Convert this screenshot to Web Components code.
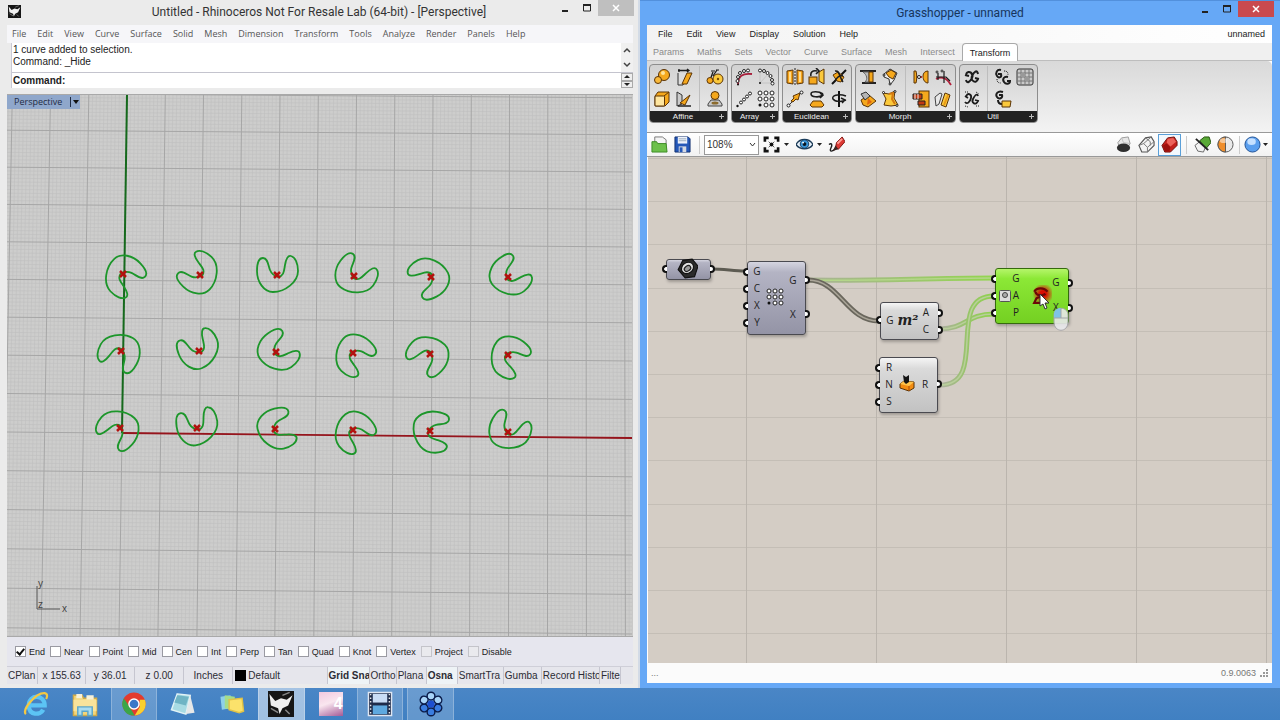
<!DOCTYPE html>
<html lang="en">
<head>
<meta charset="utf-8">
<title>Desktop</title>
<style>
  html, body { height: 100%; margin: 0; }
  body { font-family: "Liberation Sans", Arial, sans-serif; overflow: hidden; }
</style>
</head>
<body>
<desk-top></desk-top>

<script>
const SYSTEM_FONT = '"Open Sans", "Noto Sans", sans-serif';

// shared by every shadow root
const BASE_CSS = `
  * { box-sizing: border-box; }
  button, select, input {
    font: inherit; color: inherit; margin: 0; padding: 0;
    border: 0; background: none; border-radius: 0; outline: none;
  }
  button { display: inline-flex; align-items: center; justify-content: center; }
  svg { display: block; }
`;

class BaseElement extends HTMLElement {
  connectedCallback() {
    if (this.shadowRoot) return;
    const shadow = this.attachShadow({ mode: 'open' });
    shadow.innerHTML = `<style>${BASE_CSS}${this.styles()}</style>${this.template()}`;
  }
  styles() { return ''; }
  template() { return '<slot></slot>'; }
}

/* ---------- icons ---------- */

const OR = 'fill="#f5a81c" stroke="#5b3406"';
const YE = 'fill="#fbc93c" stroke="#5b3406"';
const DK = 'fill="none" stroke="#1c1c1c"';
const RING = 'fill="#fff" stroke="#222"';
const ring = (x, y, r = 1.5) => `<circle cx="${x}" cy="${y}" r="${r}" ${RING}/>`;

const ICONS = {
  // Affine
  scale: `<circle cx="11" cy="7" r="5.5" fill="#f6a91e" stroke="#5b3406"/><circle cx="10" cy="5" r="2" fill="#ffe49a"/><circle cx="5" cy="12" r="3.5" fill="#f9b93a" stroke="#5b3406"/>`,
  shear: `<path d="M3 5v12h5L14 5" fill="#ddd" stroke="#333"/><path d="M7 16L12 5h5l-5 11z" ${OR}/><path d="M3 2.5h11M12 1l2 1.5L12 4M4 1v3" ${DK} stroke-width="1.3"/>`,
  scalenu: `<path d="M7 4L4 12M7 8l4-6" ${DK} stroke-width="1.3"/><path d="M5 3h4M10 2h3" ${DK}/><circle cx="4" cy="12.5" r="3" ${OR}/><circle cx="12" cy="11" r="5" ${YE}/><circle cx="12" cy="11" r="1.2" fill="#7a4b00"/>`,
  box: `<path d="M2 6l3-4h11v10l-4 4H2z" ${OR}/><rect x="2" y="6" width="9.5" height="10" rx="1" fill="#ffe6a0" stroke="#5b3406"/><path d="M11 6l5-4" stroke="#5b3406"/>`,
  triangle: `<path d="M2 2v14l5-2V5z" fill="#ccc" stroke="#333"/><path d="M5 13L15 5l-5 10z" ${OR}/><path d="M3 16h13" stroke="#222" stroke-width="1.5"/>`,
  project: `<path d="M2 14l3-4h8l3 4v2H2z" fill="#c9c9c9" stroke="#444"/><ellipse cx="9" cy="13" rx="3.5" ry="1.5" fill="#8b6b2e"/><circle cx="9" cy="5.5" r="4" ${OR}/>`,
  // Array
  arrcrv: `<path d="M3 17C3 8 7 5 17 6" fill="none" stroke="#a8203c" stroke-width="1.8"/>${ring(2.5, 13)}${ring(3, 9)}${ring(5, 5)}${ring(9, 3)}${ring(13, 2.5)}<circle cx="3" cy="16.5" r="1" fill="#111"/>`,
  arrpolar: `<path d="M3 15L12 5M3 15h12M3 15V4" stroke="#c4c4c4"/>${ring(3, 2.5)}${ring(7, 3)}${ring(10.5, 5)}${ring(13.5, 8)}${ring(15, 12)}${ring(15.5, 15.5)}<circle cx="3" cy="15" r="1" fill="#111"/>`,
  arrline: `<circle cx="2.5" cy="16" r="1.2" fill="#111"/>${ring(6, 12.5)}${ring(9, 9.5)}${ring(12, 6.5)}${ring(15, 3.5)}`,
  arrgrid: [3, 9, 15].map(x => ring(x, 3, 2) + ring(x, 9, 2) + (x === 3 ? '<circle cx="3" cy="15" r="1.5" fill="#111"/>' : ring(x, 15, 2))).join(''),
  // Euclidean
  mirror: `<path d="M1 3l6-1v14l-6-1zM11 2l6 1v12l-6 1z" fill="#f7a51c" stroke="#5b3406"/><path d="M4 4v10M14 4v10" stroke="#ffdb8a" stroke-width="2"/><path d="M9 0v18" stroke="#222" stroke-dasharray="2 1"/>`,
  orient: `<rect x="1" y="9" width="8" height="7" ${OR}/><path d="M11 4l5-3v15l-5-3z" ${YE}/><path d="M3 8C2 4 5 2 9 3M8 0l3 3-3 3" ${DK} stroke-width="1.6"/>`,
  rotaxis: `<path d="M2 16L16 2" stroke="#111" stroke-width="2"/><path d="M3 7l5-3 6 5-3 5-4-1z" ${OR}/><path d="M5 3c5-1 4 6 8 11M13 8c-4-1-6 1-8 5" ${DK} stroke-width="1.5"/>`,
  move: `<path d="M3 15L15 3" stroke="#333"/><path d="M5 11l3-3-1-2 7-3-2 7-2-1-3 3z" ${OR}/>${ring(2.5, 15.5)}${ring(15.5, 2.5)}`,
  rotate3d: `<path d="M15 4C11 1 3 1 3 4s8 4 12 1M12 3l3 2-3 3" ${DK} stroke-width="1.6"/><path d="M5 11h8l3 4-2 2H4l-2-2z" ${OR}/>`,
  rotate: `<path d="M9 1v16" stroke="#111" stroke-width="2"/><path d="M16 6C8 3 1 6 3 9c2 3 9 3 13 1M11 8l4 2-3 3" ${DK} stroke-width="1.5"/>`,
  // Morph
  boxmorph: `<path d="M1 3h16M3 15h14" stroke="#222" stroke-width="1.8"/><path d="M4 4c4 3 5 7 2 10h4V4z" fill="#bbb" stroke="#666"/><path d="M10 4h4v10h-4z" ${OR}/>`,
  surfmorph: `<path d="M3 6l6-5 7 4-3 7-4 5-1-6-5-2z" fill="#eee" stroke="#333"/><path d="M5 5l5-3 5 3-3 6-4-2z" ${OR}/>${ring(9, 16, 1)}${ring(3, 7, 1)}`,
  blend: `<path d="M2 3h2c1 4 1 8 0 12H2z" ${OR}/><path d="M11 8c0-3 2-5 5-5v12c-3 0-5-3-5-7z" ${OR}/><path d="M5 9h5" stroke="#b33" stroke-width="2"/>${ring(7, 9)}`,
  mapcrv: `<path d="M2 11c6-3 11-1 15 6" fill="none" stroke="#b3213c" stroke-width="1.8"/><path d="M2 9h10l4 4M10 3v12M4 5v7" ${DK} stroke-width="1.2"/>${ring(3, 4, 1)}${ring(8, 3, 1)}`,
  camera: `<path d="M2 10l8-5 7 6-8 6-5-2z" ${OR}/><path d="M2 4l5-2 4 4-5 4z" fill="#b5b5b5" stroke="#333"/><path d="M9 8l4 4-5 3z" fill="#e0650f"/>`,
  splop: `<path d="M2 3l6 1 6-3-1 7 4 7-7 1-7-1 2-6z" ${YE}/><path d="M8 4l4-1-1 6 3 5" fill="none" stroke="#d57a10" stroke-width="2"/>${ring(2.5, 2.5, 1)}${ring(14, 1.5, 1)}${ring(16, 15.5, 1)}`,
  sporph: `<rect x="7" y="1" width="10" height="16" ${OR}/><path d="M1 4h9v5H1zM6 11h7v4H6z" fill="#c23a12" stroke="#222"/><path d="M3 4v5M6 4v5" stroke="#eee"/>`,
  flow: `<path d="M1 7l5-4 2 1-3 10-3 2z" fill="#e8e8e8" stroke="#444"/><path d="M7 15l4-12 5 2-4 12z" ${YE}/><path d="M10 15l4-10" stroke="#ea9a16" stroke-width="2"/>`,
  // Util
  group: `<path d="M3 6c3-5 8 0 6 4s-5 6-6 2M15 11c-2 6-8 1-6-3s5-7 6-2M2 7l4 1M16 11l-4-1" ${DK} stroke-width="2"/>`,
  ungroup: `<path d="M3 7c1-5 6-3 5 1s-4 7-6 4M15 11c-2 5-7 2-5-2s4-6 5-3M2 6l3 2M16 11l-4-1" ${DK} stroke-width="1.8"/><path d="M2 2h3M13 2l3 2M2 16l3 1M13 16h3" ${DK} stroke-dasharray="1 1"/>`,
  split: `<path d="M7 2C3 1 1 5 3 8s5 1 4-2H4M14 9c-4-1-6 2-4 5s6 2 6-1h-3" ${DK} stroke-width="2"/><path d="M10 3c3 0 4 1 4 4M3 11c0 3 1 4 4 4" ${DK} stroke-dasharray="1 1"/>`,
  compound: `<path d="M9 2C4 0 1 4 3 7s6 1 5-2H5M4 10c0 3 1 4 4 4" ${DK} stroke-width="2"/><path d="M8 11h9l-1 6H8z" ${YE}/>`,
  sheet: `<rect x="1" y="1" width="16" height="16" rx="2" fill="#c9c9c9" stroke="#333"/><path d="M5 1v16M9 1v16M13 1v16M1 5h16M1 9h16M1 13h16" stroke="#777"/><path d="M5 5h4v4H5zM9 9h4v4H9z" fill="#999"/>`,
  // Canvas toolbar
  open: `<path d="M4 1h8l4 3v12H4z" fill="#f4f4f4" stroke="#777"/><path d="M1 6h5l1 2h9l1 9H1z" fill="#6cc04a" stroke="#3c8a24"/>`,
  save: `<path d="M1 1h14l2 2v14H1z" fill="#2457b8" stroke="#12306e"/><rect x="4" y="1" width="10" height="7" fill="#eef2fb"/><path d="M5 3h8M5 5h8" stroke="#9ab"/><rect x="5" y="11" width="8" height="6" fill="#d5d9e2"/><rect x="6" y="12" width="3" height="5" fill="#2457b8"/>`,
  fit: `<path d="M2 6V2h4M12 2h4v4M16 12v4h-4M6 16H2v-4" fill="none" stroke="#111" stroke-width="2.8"/><path d="M6 6l6 6M12 6l-6 6" stroke="#555"/><circle cx="9" cy="9" r="2" fill="#111"/>`,
  eye: `<path d="M0 9C4 2 14 2 18 9 14 15 4 15 0 9z" fill="#e6f1fa" stroke="#1d3b57" stroke-width="1.5"/><circle cx="9" cy="8.5" r="4.5" fill="#3a96d8" stroke="#153a5e"/><circle cx="9" cy="8.5" r="2" fill="#081522"/><circle cx="7.5" cy="7" r="1" fill="#fff"/>`,
  pen: `<path d="M1 9c3-2 4 0 2 4s2 4 5 0" ${DK} stroke-width="1.5"/><path d="M8 12l1-5 6-6 3 5-7 8z" fill="#dd3a35" stroke="#7d1410"/><path d="M10 8l5-5" stroke="#ff9f98" stroke-width="2"/><path d="M5 16l3-6 3 4z" fill="#3b2420"/>`,
  noPreview: `<path d="M3 7l4-5 7-1 2 7-3 5H5z" fill="#e6e6e6" stroke="#999"/><path d="M7 2l2 5 7 1" fill="none" stroke="#bbb"/><ellipse cx="9" cy="12.5" rx="7" ry="4.5" fill="#2e2e2e"/>`,
  wire: `<path d="M1 10l7-8 6-1 3 5v4l-7 7H4z" fill="#f4f4f4" stroke="#555" stroke-width="1.2"/><path d="M1 10l5-2 4 4v5M8 2l5 4v4M6 8l8-7M10 12l7-6" fill="none" stroke="#777"/>`,
  shaded: `<path d="M1 10l6-8 7-1 3 5v4l-7 7H4z" fill="#c4201c" stroke="#6c0d0a"/><path d="M7 3l6-1 3 4-6 5-4-4z" fill="#ec625a"/><path d="M2 10l4-2 4 4-1 4H4z" fill="#9d100d"/>`,
  selOnly: `<path d="M1 10l5-4 6 6-2 5-6-1z" fill="#f2f2f2" stroke="#666"/><path d="M6 5l5-4h5l2 6-5 6z" fill="#59a936" stroke="#24520f"/><path d="M2 3l13 12" stroke="#222" stroke-width="2"/>`,
  half: `<circle cx="9" cy="9" r="8" fill="#e9e9e9" stroke="#555"/><path d="M9 1a8 8 0 0 0 0 16z" fill="#ef8e2c" stroke="#555"/><ellipse cx="7" cy="5" rx="4" ry="2.500" fill="#fff" opacity=".5"/>`,
  sphere: `<circle cx="9" cy="9" r="8" fill="#5b9fee" stroke="#1e4f92"/><ellipse cx="8" cy="6" rx="4.500" ry="3.500" fill="#c7e1ff"/>`,
  // Node icons
  nut: `<path d="M5 2l8-1 5 6-3 9-8 1-6-7z" fill="#2b2b2b" stroke="#111"/><ellipse cx="9" cy="8.500" rx="5.500" ry="4.500" transform="rotate(-35 9 8.500)" fill="#e2e2e2" stroke="#111"/><ellipse cx="9" cy="9" rx="3" ry="2.200" transform="rotate(-35 9 9)" fill="#999" stroke="#222"/>`,
  random: `<path d="M2 9l4-3 10 1v6l-5 3-9-3z" fill="#f28c12" stroke="#5b3406"/><path d="M2 9l4-3 10 1-5 4z" fill="#ffc34a"/><path d="M11 11v5" stroke="#a84a05"/><path d="M5 0l3 2 3-2v7l-3 2-2-2z" fill="#141414"/>`,
  rot: `<defs><radialGradient id="g"><stop offset=".3" stop-color="#d00" stop-opacity=".95"/><stop offset="1" stop-color="#d00" stop-opacity="0"/></radialGradient></defs><circle cx="10" cy="8" r="9.500" fill="url(#g)"/><path d="M2 6c2-4 9-4 12 0M3 6c1 4 7 4 9 2l-8 4-2 4h11" fill="none" stroke="#6d0707" stroke-width="2"/>`,
  // Taskbar and title bar
  rhino: `<path d="M0 0h18v18H0z" fill="#161616"/><path d="M1 2l4 5 4-2 4 1 4-3-3 7-4 2-2 4-1-4-5-2z" fill="#f1f1f1"/><path d="M2 12l5 3M10 3l5-2M12 13l3 3" stroke="#8a8a8a"/>`,
  ie: `<path d="M4 10h11c0-8-11-8-11 0 0 7 8 7 10 3" fill="none" stroke="#5cc4f5" stroke-width="3"/><path d="M2 16C-1 13 9 1 15 1.500c3 .5 1 4 1 4" fill="none" stroke="#f4c842" stroke-width="1.500"/>`,
  folder: `<path d="M1 3h6l1 2h9v12H1z" fill="#f2d67b" stroke="#d1ab49"/><path d="M3 2h4v3H3zM10 3h5v3h-5z" fill="#f7f1d8"/><path d="M1 6h16v8H1z" fill="#f8e39b"/><path d="M4 17v-6h10v6h-3v-3H7v3z" fill="#a9dcf1" stroke="#5ba6c9"/>`,
  chrome: `<circle cx="9" cy="9" r="8" fill="#e33b2e"/><path d="M2 5l4.500 7 3 5A8 8 0 0 1 2 5z" fill="#3ba648"/><path d="M9.500 17L13 11V6h3.500A8 8 0 0 1 9.500 17z" fill="#f8d12f"/><circle cx="9" cy="9" r="4" fill="#fff"/><circle cx="9" cy="9" r="3" fill="#3b77c8"/>`,
  notes: `<path d="M5 2l9 1-3 13-10-3z" fill="#a8dbe3" stroke="#e2f3f6"/><path d="M14 3l3 12-6 1z" fill="#e6e8e8"/><path d="M5 3l8 1-2 6-8-2z" fill="#6fb4c4"/>`,
  sticky: `<path d="M1 4l7-1v9l-6 1z" fill="#8ed0e8"/><path d="M4 3l7 1-1 9-6-1z" fill="#a5dc8a"/><path d="M7 6l9-1 1 9-3 1-7-2z" fill="#fbe26b" stroke="#e0c247"/>`,
  film: `<path d="M1 1h16v16H1z" fill="#1e2b4a" stroke="#dfe6f2"/><path d="M4 2h10v6H4z" fill="#c9dcf5"/><path d="M4 10h10v6H4z" fill="#5ea8df"/><path d="M2.500 2v15M15.500 2v15" stroke="#e8e8e8" stroke-dasharray="1 1.500"/>`,
  flower: [0, 60, 120, 180, 240, 300].map(a => `<circle cx="9" cy="3.500" r="2.700" fill="${a < 90 || a > 270 ? '#a8d4f8' : '#3a7de0'}" stroke="#0b1c4a" transform="rotate(${a} 9 9)"/>`).join('') + '<circle cx="9" cy="9" r="2.500" fill="#1d4fd0"/>'
};

class AppIcon extends BaseElement {
  styles() {
    return `
      :host { display: inline-block; width: var(--icon-size, 18px); height: var(--icon-size, 18px); flex: none; }
      svg { width: 100%; height: 100%; }
    `;
  }
  template() {
    return `<svg viewBox="0 0 18 18" aria-hidden="true">${ICONS[this.getAttribute('name')] || ''}</svg>`;
  }
}
customElements.define('app-icon', AppIcon);

/* ---------- window parts ---------- */

class TitleBar extends BaseElement {
  styles() {
    return `
      :host { display: grid; grid-template-columns: 1fr auto 1fr; height: 25px; flex: none; font: 12px/25px Roboto, sans-serif; color: #333; }
      .left { padding: 5px 0 0 8px; --icon-size: 13px; line-height: 0; }
      .controls { display: flex; justify-content: flex-end; align-items: flex-start; padding-right: var(--controls-inset, 6px); }
      .controls button { width: 22px; height: 16px; color: #222; }
      .controls .close { width: 36px; background: var(--close-color, #bfbfbf); color: #fff; }
    `;
  }
  template() {
    return `
      <div class="left"><slot name="icon"></slot></div>
      <div><slot></slot></div>
      <div class="controls">
        <button aria-label="Minimize"><svg width="10" height="10"><path d="M2 8h6" stroke="currentColor" stroke-width="2"/></svg></button>
        <button aria-label="Maximize"><svg width="10" height="10"><path d="M1.500 2h7v6h-7z" fill="none" stroke="currentColor"/><path d="M1 2h8" stroke="currentColor" stroke-width="2"/></svg></button>
        <button class="close" aria-label="Close"><svg width="8" height="8"><path d="M1 1l6 6M7 1L1 7" stroke="currentColor" stroke-width="1.500"/></svg></button>
      </div>
    `;
  }
}
customElements.define('title-bar', TitleBar);

class MenuBar extends BaseElement {
  styles() {
    return `
      :host { display: flex; align-items: center; flex: none; }
      nav { display: flex; gap: var(--menu-gap, 11px); flex: 1; }
    `;
  }
  template() {
    const items = this.getAttribute('items').split(',');
    return `<nav>${items.map(i => `<button>${i}</button>`).join('')}</nav><slot></slot>`;
  }
}
customElements.define('menu-bar', MenuBar);

/* ---------- Rhino ---------- */

class CommandArea extends BaseElement {
  styles() {
    return `
      :host { display: grid; grid-template-columns: 1fr 12px; margin-left: 4px; background: #fff; border-left: 1px solid #c9c9d6; font-size: 10px; line-height: 12px; color: #222; flex: none; }
      .history { padding: 1px 1px 4px; border-bottom: 1px solid #c4c4ce; }
      .prompt { display: flex; padding: 0 1px; height: 15px; align-items: center; font-weight: bold; }
      .prompt input { flex: 1; min-width: 0; margin-left: 4px; }
      .scroll { display: flex; flex-direction: column; justify-content: space-between; background: #f0f0f0; padding: 3px 0; border-bottom: 1px solid #c4c4ce; }
      .spin { display: flex; flex-direction: column; }
      .spin button { flex: 1; border: 1px solid #aaa; background: #eee; }
    `;
  }
  template() {
    return `
      <div class="history">1 curve added to selection.<br>Command: _Hide</div>
      <div class="scroll">
        <button aria-label="Scroll up"><svg width="8" height="8"><path d="M1 6l3-3 3 3" fill="none" stroke="#444" stroke-width="1.500"/></svg></button>
        <button aria-label="Scroll down"><svg width="8" height="8"><path d="M1 2l3 3 3-3" fill="none" stroke="#444" stroke-width="1.500"/></svg></button>
      </div>
      <div class="prompt"><label for="cmd">Command:</label><input id="cmd" type="text"></div>
      <div class="spin">
        <button aria-label="Previous"><svg width="6" height="4"><path d="M3 0l3 3H0z" fill="#222"/></svg></button>
        <button aria-label="Next"><svg width="6" height="4"><path d="M3 4l3-3H0z" fill="#222"/></svg></button>
      </div>
    `;
  }
}
customElements.define('command-area', CommandArea);

// x, y of the pivot and the rotation in degrees
const CURVES = [
  [116, 179, 137], [193, 180, -46], [270, 180, 0], [347, 181, 37], [424, 182, -117], [501, 182, 52],
  [114, 256, -151], [192, 256, -22], [269, 257, 56], [346, 258, 134], [423, 259, -136], [501, 260, 128],
  [113, 333, -138], [190, 333, -8], [268, 334, 77], [346, 335, 141], [423, 336, 99], [501, 337, 30]
];
const CURVE_PATH = 'M1 2C7 1 7-4 8-10 9-16 11-20 14-19 18-18 21-12 21-4 21 7 8 17-4 17-13 17-20 7-20-4-20-12-18-17-14-17-9-17-9-10-7-5-5 0-2 1 1 2Z';

class RhinoViewport extends BaseElement {
  styles() {
    return `
      :host { display: block; position: relative; flex: 1; min-height: 0; overflow: hidden; background: #cdcdcc; border: solid #a9a9a9; border-width: 1px 0; }
      .scene { width: 100%; height: 100%; }
      .tag { position: absolute; left: 0; top: 0; height: 14px; padding: 0 1px 0 7px; gap: 8px; background: #8fa7cb; color: #1f2c44; font: 9px/14px ${SYSTEM_FONT}; }
      .tag svg { border-left: 1px solid #1f2c44; }
      .axes { position: absolute; left: 28px; bottom: 22px; }
    `;
  }
  grid() {
    let minor = '', major = '';
    const top = x => 120 + 38.25 * x;
    const bottom = x => 112 + 38.95 * x;
    const left = y => 337 + 38.6 * y + 0.11 * y * y;
    const right = y => 343 + 38.7 * y + 0.1 * y * y;
    for (let i = -40; i <= 560; i++) {
      const k = i / 10;
      const v = `M${top(k).toFixed(1)} 0L${bottom(k).toFixed(1)} 543`;
      i % 10 ? minor += v : major += v;
    }
    for (let i = -95; i <= 120; i++) {
      const k = i / 10;
      const h = `M0 ${left(k).toFixed(1)}L625 ${right(k).toFixed(1)}`;
      i % 10 ? minor += h : major += h;
    }
    return `<path d="${minor}" stroke="#c0c0c0" stroke-width=".6"/><path d="${major}" stroke="#a6a6a6"/>`;
  }
  template() {
    return `
      <svg class="scene">
        ${this.grid()}
        <path d="M115 338L625 343" stroke="#96141c" stroke-width="1.800"/>
        <path d="M120 0L115 338" stroke="#15691c" stroke-width="2"/>
        <g fill="none" stroke="#1c962a" stroke-width="1.800">
          ${CURVES.map(([x, y, a]) => `<path transform="translate(${x} ${y}) rotate(${a})" d="${CURVE_PATH}"/>`).join('')}
        </g>
        <g stroke="#b3120f" stroke-width="2.500">
          ${CURVES.map(([x, y]) => `<path d="M${x - 3} ${y - 3}l6 6m0 -6l-6 6"/>`).join('')}
        </g>
      </svg>
      <button class="tag">Perspective<svg width="9" height="10"><path d="M2 3h6l-3 4z" fill="#111"/></svg></button>
      <svg class="axes" width="36" height="36" font-size="10" fill="#444">
        <path d="M2 8v23h23" fill="none" stroke="#555"/>
        <text x="3" y="9">y</text><text x="27" y="34">x</text><text x="3" y="30">z</text>
      </svg>
    `;
  }
}
customElements.define('rhino-viewport', RhinoViewport);

class SnapBar extends BaseElement {
  styles() {
    return `
      :host { display: flex; align-items: center; gap: 5px; height: 29px; padding-left: 8px; background: #e6e6ee; font-size: 9px; line-height: 12px; color: #222; flex: none; }
      label { display: flex; align-items: center; gap: 3px; }
      input { appearance: none; width: 11px; height: 11px; background: #fff; border: 1px solid #9a9aa2; display: grid; place-items: center; }
      input:checked::before { content: ""; width: 3px; height: 6px; margin-bottom: 2px; border: solid #111; border-width: 0 2px 2px 0; transform: rotate(40deg); }
      .off input { background: #eaeaee; border-color: #c4c4ca; }
    `;
  }
  template() {
    const snaps = ['End', 'Near', 'Point', 'Mid', 'Cen', 'Int', 'Perp', 'Tan', 'Quad', 'Knot', 'Vertex', 'Project', 'Disable'];
    return snaps.map((s, i) => `
      <label class="${i > 10 ? 'off' : ''}"><input type="checkbox" ${i === 0 ? 'checked' : ''}>${s}</label>
    `).join('');
  }
}
customElements.define('snap-bar', SnapBar);

class RhinoStatus extends BaseElement {
  styles() {
    return `
      :host { display: grid; grid-template-columns: 31fr 48fr 49fr 49fr 49fr 94fr 42fr 27fr 30fr 31fr 46fr 38fr 58fr 21fr; height: 18px; padding-right: 12px; background: #e6e6ec; border-top: 1px solid #cfcfd8; font-size: 10px; line-height: 17px; color: #2c2c34; flex: none; }
      :host > * { min-width: 0; overflow: hidden; white-space: nowrap; border-right: 1px solid #c6c6d0; text-align: center; }
      button { justify-content: flex-start; padding-left: 1px; }
      .on { font-weight: bold; background: #eef3f6; }
      .layer { display: flex; align-items: center; gap: 2px; padding-left: 2px; }
      .layer i { width: 11px; height: 11px; background: #000; flex: none; }
    `;
  }
  template() {
    return `
      <button title="CPlane">CPlan</button>
      <span>x 155.63</span>
      <span>y 36.01</span>
      <span>z 0.00</span>
      <span>Inches</span>
      <span class="layer"><i></i>Default</span>
      <button class="on" title="Grid Snap">Grid Sna</button>
      <button title="Ortho">Ortho</button>
      <button title="Planar">Plana</button>
      <button class="on" title="Osnap">Osna</button>
      <button title="SmartTrack">SmartTra</button>
      <button title="Gumball">Gumba</button>
      <button title="Record History">Record Histo</button>
      <button title="Filter">Filte</button>
    `;
  }
}
customElements.define('rhino-status', RhinoStatus);

class RhinoWindow extends BaseElement {
  styles() {
    return `
      :host { display: flex; flex-direction: column; background: #ebebeb; border-right: 2px solid #d3dbe6; min-width: 0; --controls-inset: 4px; }
      .body { display: flex; flex-direction: column; flex: 1; min-height: 0; margin: 0 5px 4px 7px; }
      menu-bar { height: 18px; padding-left: 5px; background: #f6f6f9; font: 9px/18px ${SYSTEM_FONT}; color: #555; }
      rhino-viewport { margin-top: 6px; }
    `;
  }
  template() {
    return `
      <title-bar><app-icon slot="icon" name="rhino"></app-icon>Untitled - Rhinoceros Not For Resale Lab (64-bit) - [Perspective]</title-bar>
      <div class="body">
        <menu-bar items="File,Edit,View,Curve,Surface,Solid,Mesh,Dimension,Transform,Tools,Analyze,Render,Panels,Help"></menu-bar>
        <command-area></command-area>
        <rhino-viewport></rhino-viewport>
        <snap-bar></snap-bar>
        <rhino-status></rhino-status>
      </div>
    `;
  }
}
customElements.define('rhino-window', RhinoWindow);

/* ---------- Grasshopper ---------- */

class RibbonTabs extends BaseElement {
  styles() {
    return `
      :host { display: flex; align-items: flex-end; height: 18px; background: #f0f0f0; padding-left: 6px; gap: 13px; font-size: 9px; color: #8a8a8a; border-bottom: 1px solid #bdbdbd; flex: none; }
      button { height: 16px; }
      .active { height: 18px; margin: 0 0 -1px -6px; padding: 0 7px; background: #fff; border: 1px solid #a9a9a9; border-bottom: 0; border-radius: 4px 4px 0 0; color: #222; }
    `;
  }
  template() {
    const tabs = ['Params', 'Maths', 'Sets', 'Vector', 'Curve', 'Surface', 'Mesh', 'Intersect'];
    return tabs.map(t => `<button>${t}</button>`).join('') + '<button class="active">Transform</button>';
  }
}
customElements.define('ribbon-tabs', RibbonTabs);

// icons="a,b;c|d;e": columns split by commas, rows by ";", "|" is a divider
class RibbonGroup extends BaseElement {
  styles() {
    return `
      :host { display: flex; flex-direction: column; border: 1px solid #8d8d8d; border-radius: 4px; background: linear-gradient(#d2d2d2, #ececec); overflow: hidden; }
      .icons { display: flex; flex: 1; padding: 1px 1px 0; }
      .part { display: grid; grid-auto-rows: 22px; }
      .part + .part { margin-left: 4px; padding-left: 4px; border-left: 1px solid #bdbdbd; }
      .part button { width: 22px; height: 22px; }
      footer { display: flex; align-items: center; height: 11px; background: #222; color: #eee; font-size: 8px; line-height: 11px; }
      footer span { flex: 1; text-align: center; }
      footer button { width: 11px; color: #bbb; }
    `;
  }
  template() {
    const parts = this.getAttribute('icons').split('|').map(p => p.split(';').map(r => r.split(',')));
    return `
      <div class="icons">
        ${parts.map(rows => `<div class="part" style="grid-template-columns: repeat(${rows[0].length}, 22px)">${
          rows.flat().map(n => `<button aria-label="${n}"><app-icon name="${n}"></app-icon></button>`).join('')
        }</div>`).join('')}
      </div>
      <footer><span><slot></slot></span><button aria-label="More"><svg width="5" height="5"><path d="M0 2.500h5M2.500 0v5" stroke="currentColor"/></svg></button></footer>
    `;
  }
}
customElements.define('ribbon-group', RibbonGroup);

class CanvasToolbar extends BaseElement {
  styles() {
    return `
      :host { display: flex; align-items: center; height: 25px; padding: 0 3px 0 1px; background: linear-gradient(#fff, #f2f2f2); border: solid #999; border-width: 1px 0; flex: none; font-size: 10px; color: #333; --icon-size: 17px; }
      button { width: 23px; height: 22px; flex: none; }
      .drop { width: 33px; padding-left: 4px; gap: 4px; justify-content: flex-start; }
      .drop.last { width: 28px; padding-left: 3px; gap: 2px; }
      .selected { border: 1px solid #5a9fd8; background: #f3f8fd; }
      .sep { width: 1px; height: 18px; background: #ccc; margin: 0 4px 0 5px; }
      .sep.tight { margin: 0 1px 0 2px; }
      .space { flex: 1; }
      .zoom { position: relative; display: flex; align-items: center; }
      select { appearance: none; width: 55px; height: 20px; border: 1px solid #999; background: #fff; padding-left: 2px; }
      .zoom svg { position: absolute; right: 3px; pointer-events: none; }
    `;
  }
  template() {
    const arrow = '<svg width="5" height="3"><path d="M0 0h5L2.500 3z" fill="#222"/></svg>';
    return `
      <button aria-label="Open"><app-icon name="open"></app-icon></button>
      <button aria-label="Save"><app-icon name="save"></app-icon></button>
      <span class="sep"></span>
      <span class="zoom">
        <select aria-label="Zoom"><option>108%</option><option>100%</option></select>
        <svg width="7" height="6"><path d="M1 1l2.500 3L6 1" fill="none" stroke="#333"/></svg>
      </span>
      <button class="drop" aria-label="Zoom extents"><app-icon name="fit"></app-icon>${arrow}</button>
      <button class="drop" aria-label="Named views"><app-icon name="eye"></app-icon>${arrow}</button>
      <button aria-label="Sketch"><app-icon name="pen"></app-icon></button>
      <span class="space"></span>
      <button aria-label="No preview"><app-icon name="noPreview"></app-icon></button>
      <button aria-label="Wireframe preview"><app-icon name="wire"></app-icon></button>
      <button class="selected" aria-label="Shaded preview"><app-icon name="shaded"></app-icon></button>
      <span class="sep"></span>
      <button aria-label="Selected only"><app-icon name="selOnly"></app-icon></button>
      <button aria-label="Document preview"><app-icon name="half"></app-icon></button>
      <span class="sep tight"></span>
      <button class="drop last" aria-label="Mesh quality"><app-icon name="sphere"></app-icon>${arrow}</button>
    `;
  }
}
customElements.define('canvas-toolbar', CanvasToolbar);

class GhNode extends BaseElement {
  styles() {
    return `
      :host { position: absolute; display: flex; align-items: stretch; padding: 1px 6px 3px 3px; border: 1px solid #4a4a50; border-radius: 3px; font: 10px/17px ${SYSTEM_FONT}; color: #222; background: linear-gradient(#f5f5f5, #dadada 20%, #c2c2c2); box-shadow: 1px 2px 3px rgba(0, 0, 0, .25); }
      :host([kind="hidden"]) { background: linear-gradient(#d5d5e0, #b4b4c4 14%, #9494a6); }
      :host([kind="selected"]) { background: linear-gradient(#b5f56a, #8ce836 18%, #74d022); border-color: #356a0d; }
      .ports { display: flex; flex-direction: column; }
      .ports div { position: relative; flex: 1; display: flex; align-items: center; justify-content: center; min-width: 12px; }
      .in div { min-width: var(--in-width, 12px); }
      .ports.bare div { min-width: 0; }
      .ports div::before { content: ""; position: absolute; left: -8px; width: 5px; height: 8px; border: 2px solid #111; border-right: 0; border-radius: 5px 0 0 5px; background: #fff; box-sizing: border-box; }
      .out div::before { left: auto; right: -11px; border: 2px solid #111; border-left: 0; border-radius: 0 5px 5px 0; }
      .middle { flex: 1; display: flex; align-items: center; justify-content: center; min-width: 0; }
    `;
  }
  template() {
    const side = name => {
      const list = this.getAttribute(name).split(',');
      return `<div class="ports ${name} ${list[0] ? '' : 'bare'}">${list.map(p => `<div>${p}</div>`).join('')}</div>`;
    };
    return `${side('in')}<div class="middle"><slot></slot></div>${side('out')}`;
  }
}
customElements.define('gh-node', GhNode);

class GhCanvas extends BaseElement {
  styles() {
    return `
      :host { display: block; position: relative; flex: 1; min-height: 0; overflow: hidden; background: #d4cdc5; }
      .wires { position: absolute; inset: 0; width: 100%; height: 100%; }
      .param { left: 18px; top: 102px; width: 45px; height: 21px; --icon-size: 21px; }
      .grid { left: 99px; top: 104px; width: 59px; height: 74px; }
      .area { left: 232px; top: 145px; width: 59px; height: 38px; }
      .area b { font: italic bold 14px "DejaVu Serif", serif; }
      .random { left: 231px; top: 200px; width: 59px; height: 56px; }
      .rotate { left: 347px; top: 111px; width: 74px; height: 56px; --icon-size: 20px; --in-width: 34px; }
      .badge { position: absolute; left: 351px; top: 133px; }
      .pointer { position: absolute; left: 391px; top: 136px; }
      .mouse { position: absolute; left: 404px; top: 149px; }
    `;
  }
  grid() {
    let v = '', h = '';
    for (let x = 98; x < 2600; x += 130) v += `M${x}.5 0v2000`;
    for (let i = 0; i < 40; i++) h += `M0 ${Math.round(1 + i * 43.2)}.5h3000`;
    return `<path d="${h}" stroke="#c4beb6"/><path d="${v}" stroke="#bbb5ae"/>`;
  }
  template() {
    const wire = (d, outer, inner) => `
      <path d="${d}" fill="none" stroke="${outer}" stroke-width="5"/>
      <path d="${d}" fill="none" stroke="${inner}" stroke-width="1.500"/>`;
    return `
      <svg class="wires">
        <defs>
          <linearGradient id="sel" gradientUnits="userSpaceOnUse" x1="292" y1="0" x2="346" y2="0">
            <stop offset="0" stop-color="#aeb0a0"/><stop offset=".5" stop-color="#98c46a"/><stop offset="1" stop-color="#8fd34c"/>
          </linearGradient>
          <linearGradient id="long" gradientUnits="userSpaceOnUse" x1="160" y1="0" x2="346" y2="0">
            <stop offset="0" stop-color="#aab396"/><stop offset="1" stop-color="#92d64e"/>
          </linearGradient>
        </defs>
        ${this.grid()}
        <path d="M64 112C76 112 86 114 97 114" fill="none" stroke="#5d5b52" stroke-width="3"/>
        ${wire('M160 123C230 124 276 121 346 121', 'url(#long)', '#b4d68a')}
        ${wire('M292 172C318 172 318 157 346 157', 'url(#sel)', '#b9cf9b')}
        ${wire('M292 228C342 228 296 139 346 139', 'url(#sel)', '#b9cf9b')}
        ${wire('M160 123C192 123 198 164 231 164', '#6a675d', '#aaa598')}
      </svg>
      <gh-node class="param" kind="hidden" in="" out=""><app-icon name="nut"></app-icon></gh-node>
      <gh-node class="grid" kind="hidden" in="G,C,X,Y" out="G,X"><app-icon name="arrgrid"></app-icon></gh-node>
      <gh-node class="area" in="G" out="A,C"><b>m²</b></gh-node>
      <gh-node class="random" in="R,N,S" out="R"><app-icon name="random"></app-icon></gh-node>
      <gh-node class="rotate" kind="selected" in="G,A,P" out="G,X"><app-icon name="rot"></app-icon></gh-node>
      <svg class="badge" width="12" height="12"><rect x=".5" y=".5" width="11" height="11" rx="1" fill="#dcdcdc" stroke="#555"/><circle cx="6" cy="5" r="2.500" fill="#aaa" stroke="#444"/></svg>
      <svg class="mouse" width="18" height="27"><path d="M2 9C2 0 16 0 16 9v7c0 11-14 11-14 0z" fill="#e9e9ec" stroke="#a4a4aa" opacity=".9"/><path d="M2 12V9c0-5 3-7 7-7v10z" fill="#7fc3e6"/><path d="M2 12h14M9 2v10" stroke="#a4a4aa"/></svg>
      <svg class="pointer" width="12" height="17"><path d="M1 1v12l3-2 2 5 2-1-2-5h4z" fill="#fff" stroke="#333"/></svg>
    `;
  }
}
customElements.define('gh-canvas', GhCanvas);

class GrasshopperWindow extends BaseElement {
  styles() {
    return `
      :host { display: flex; flex-direction: column; background: #66a8f6; min-width: 0; border-top: 1px solid #5290dc; --close-color: #c94a4e; }
      title-bar { height: 24px; color: #17355c; }
      .body { display: flex; flex-direction: column; flex: 1; min-height: 0; margin: 0 8px 5px 7px; background: #fff; }
      menu-bar { height: 18px; padding: 0 7px 0 11px; font-size: 9px; line-height: 18px; color: #222; background: linear-gradient(90deg, #f3f3f3, #fff); --menu-gap: 14px; }
      .ribbon { display: flex; gap: 3px; padding: 3px 2px 9px; height: 71px; background: linear-gradient(#d9d9d9, #f3f3f3); border-radius: 0 5px 0 0; flex: none; }
      gh-canvas { margin-left: 1px; }
      footer { display: flex; align-items: center; justify-content: space-between; height: 20px; padding: 0 3px 0 4px; background: #fbfbfb; font-size: 9px; color: #777; flex: none; }
      footer div { display: flex; align-items: center; gap: 3px; }
    `;
  }
  template() {
    return `
      <title-bar>Grasshopper - unnamed</title-bar>
      <div class="body">
        <menu-bar items="File,Edit,View,Display,Solution,Help">unnamed</menu-bar>
        <ribbon-tabs></ribbon-tabs>
        <div class="ribbon">
          <ribbon-group icons="scale,shear;box,triangle|scalenu;project">Affine</ribbon-group>
          <ribbon-group icons="arrcrv,arrpolar;arrline,arrgrid">Array</ribbon-group>
          <ribbon-group icons="mirror,orient,rotaxis;move,rotate3d,rotate">Euclidean</ribbon-group>
          <ribbon-group icons="boxmorph,surfmorph;camera,splop|blend,mapcrv;sporph,flow">Morph</ribbon-group>
          <ribbon-group icons="group;ungroup|split,sheet;compound">Util</ribbon-group>
        </div>
        <canvas-toolbar></canvas-toolbar>
        <gh-canvas></gh-canvas>
        <footer>
          <span>...</span>
          <div>0.9.0063<svg width="10" height="10"><path d="M8 1v2M8 4v2M5 4v2M8 7v2M5 7v2M2 7v2" stroke="#999" stroke-width="2"/></svg></div>
        </footer>
      </div>
    `;
  }
}
customElements.define('grasshopper-window', GrasshopperWindow);

/* ---------- desktop ---------- */

class TaskBar extends BaseElement {
  styles() {
    return `
      :host { display: block; height: 32px; padding-left: 12px; background: linear-gradient(#4a86c6, #4080c2); flex: none; --icon-size: 26px; }
      nav { display: flex; width: 35%; height: 100%; }
      button { flex: 1; margin: 0 2px; }
      .open { background: rgba(255, 255, 255, .18); border: solid rgba(255, 255, 255, .25); border-width: 0 1px; }
      .current { background: rgba(255, 255, 255, .5); }
      .four { width: 24px; height: 24px; background: linear-gradient(160deg, #f3c9df, #f9e6ef 45%, #a45a96); color: #fff; font: bold 16px/24px "Liberation Sans", sans-serif; text-align: right; }
    `;
  }
  template() {
    const apps = [['ie'], ['folder'], ['chrome', 'open'], ['notes'], ['sticky'], ['rhino', 'open current'], ['four'], ['film', 'open'], ['flower', 'open']];
    return `<nav>${apps.map(([name, cls = '']) => `
      <button class="${cls}" aria-label="${name}">${name === 'four' ? '<span class="four">4</span>' : `<app-icon name="${name}"></app-icon>`}</button>
    `).join('')}</nav>`;
  }
}
customElements.define('task-bar', TaskBar);

class DeskTop extends BaseElement {
  styles() {
    return `
      :host { display: flex; flex-direction: column; height: 100vh; background: #4583c4; }
      main { display: grid; grid-template-columns: 1fr 1fr; flex: 1; min-height: 0; }
    `;
  }
  template() {
    return `<main><rhino-window></rhino-window><grasshopper-window></grasshopper-window></main><task-bar></task-bar>`;
  }
}
customElements.define('desk-top', DeskTop);
</script>
</body>
</html>
